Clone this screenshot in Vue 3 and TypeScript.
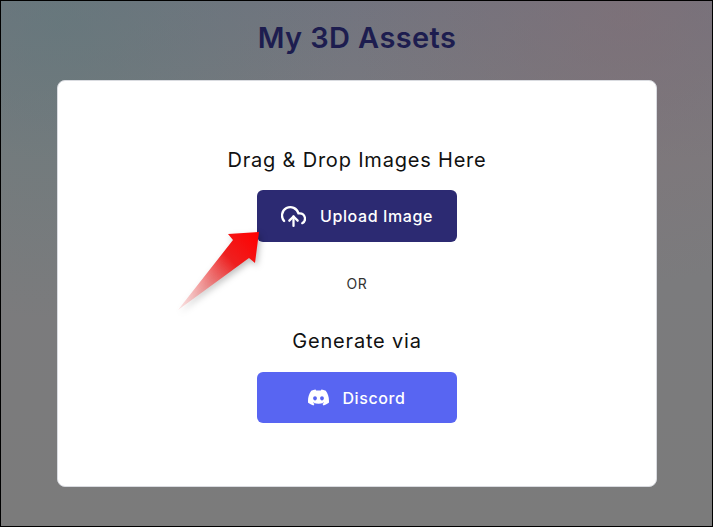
<script setup lang="ts">
const cloudPath = 'M20.39 18.39A5 5 0 0 0 18 9h-1.26A8 8 0 1 0 3 16.3'
const discordPath =
  'M13.545 2.907a13.2 13.2 0 0 0-3.257-1.011.05.05 0 0 0-.052.025c-.141.25-.297.577-.406.833a12.2 12.2 0 0 0-3.658 0 8 8 0 0 0-.412-.833.05.05 0 0 0-.052-.025c-1.125.194-2.22.534-3.257 1.011a.04.04 0 0 0-.021.018C.356 6.024-.213 9.047.066 12.032q.003.022.021.037a13.3 13.3 0 0 0 3.995 2.02.05.05 0 0 0 .056-.019q.463-.63.818-1.329a.05.05 0 0 0-.01-.059l-.018-.011a9 9 0 0 1-1.248-.595.05.05 0 0 1-.02-.066l.015-.019q.127-.095.248-.195a.05.05 0 0 1 .051-.007c2.619 1.196 5.454 1.196 8.041 0a.05.05 0 0 1 .053.007q.121.1.248.195a.05.05 0 0 1-.004.085 8 8 0 0 1-1.249.594.05.05 0 0 0-.03.03.05.05 0 0 0 .003.041c.24.465.515.909.817 1.329a.05.05 0 0 0 .056.019 13.2 13.2 0 0 0 4.001-2.02.05.05 0 0 0 .021-.037c.334-3.451-.559-6.449-2.366-9.106a.03.03 0 0 0-.02-.019m-8.198 7.307c-.789 0-1.438-.724-1.438-1.612s.637-1.613 1.438-1.613c.807 0 1.45.73 1.438 1.613 0 .888-.637 1.612-1.438 1.612m5.316 0c-.788 0-1.438-.724-1.438-1.612s.637-1.613 1.438-1.613c.807 0 1.451.73 1.438 1.613 0 .888-.631 1.612-1.438 1.612'
</script>

<template>
  <div class="page">
    <h1 class="title">My 3D Assets</h1>
    <div class="card">
      <p class="label">Drag &amp; Drop Images Here</p>
      <button type="button" class="btn upload">
        <svg class="cloud" viewBox="0 0 24 24" fill="none" stroke="currentColor" stroke-width="2.2" stroke-linecap="round" stroke-linejoin="round">
          <polyline points="16 16 12 12 8 16" />
          <line x1="12" y1="12" x2="12" y2="21" />
          <path :d="cloudPath" />
        </svg>
        <span>Upload Image</span>
      </button>
      <span class="or">OR</span>
      <p class="label generate">Generate via</p>
      <button type="button" class="btn discord">
        <svg class="discord-icon" viewBox="0 0 16 16" fill="currentColor">
          <path :d="discordPath" />
        </svg>
        <span>Discord</span>
      </button>

      <!-- callout arrow added over the screenshot -->
      <svg class="arrow" width="100" height="90" viewBox="0 0 100 90">
        <defs>
          <linearGradient id="arrowFill" x1="82" y1="8" x2="2" y2="84" gradientUnits="userSpaceOnUse">
            <stop offset="0" stop-color="#ff0000" />
            <stop offset="0.35" stop-color="#ee2020" />
            <stop offset="1" stop-color="#f5c4c4" stop-opacity="0.45" />
          </linearGradient>
        </defs>
        <polygon points="83,7 52,9 57,15 2,85 73,33 79,38" fill="url(#arrowFill)" />
      </svg>
    </div>
  </div>
</template>

<style scoped>
.page {
  box-sizing: border-box;
  width: 713px;
  height: 527px;
  border: 1px solid #000;
  padding: 0 55px 0 56px;
  display: flex;
  flex-direction: column;
  background:
    radial-gradient(circle at 8% 4%, rgba(92, 122, 122, 0.5), rgba(92, 122, 122, 0) 36%),
    radial-gradient(circle at 88% 2%, rgba(132, 110, 116, 0.55), rgba(132, 110, 116, 0) 34%),
    linear-gradient(180deg, #72747f 0%, #7b7b7e 30%, #7b7b7b 100%);
  font-family: Inter, "Noto Sans", sans-serif;
}

.title {
  margin: 0;
  height: 79px;
  line-height: 74px;
  text-align: center;
  font-size: 29px;
  font-weight: 600;
  letter-spacing: 0.4px;
  color: #1d1d4f;
}

.card {
  position: relative;
  box-sizing: border-box;
  height: 407px;
  padding-top: 64px;
  background: #fff;
  border: 1px solid #d9dbe0;
  border-radius: 8px;
  display: flex;
  flex-direction: column;
  align-items: center;
}

.label {
  margin: 0;
  height: 30px;
  line-height: 30px;
  font-size: 20px;
  letter-spacing: 0.8px;
  color: #111;
}

.generate {
  margin-top: 31px;
}

.btn {
  width: 200px;
  border: 0;
  border-radius: 6px;
  display: flex;
  align-items: center;
  justify-content: center;
  color: #fff;
  font-family: inherit;
  font-size: 16px;
  font-weight: 500;
  letter-spacing: 0.6px;
}

.upload {
  height: 52px;
  margin-top: 15px;
  gap: 14px;
  background: #2c2a72;
}

.discord {
  height: 51px;
  margin-top: 16px;
  gap: 13px;
  background: #5865f2;
}

.cloud {
  width: 25px;
  height: 25px;
}

.discord-icon {
  width: 21px;
  height: 21px;
}

.or {
  margin-top: 31px;
  height: 22px;
  line-height: 22px;
  font-size: 14px;
  letter-spacing: 0.6px;
  color: #333;
}

.arrow {
  position: absolute;
  left: 118px;
  top: 144px;
  filter: drop-shadow(2px 3px 3px rgba(0, 0, 0, 0.25));
}
</style>
